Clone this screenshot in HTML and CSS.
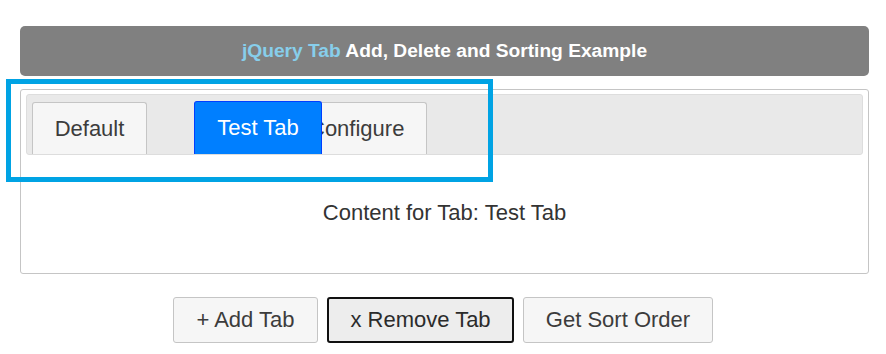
FILE: index.html
```html
<!DOCTYPE html>
<html lang="en">
<head>
<meta charset="utf-8">
<title>jQuery Tab Add, Delete and Sorting Example</title>
<link rel="stylesheet" href="styles.css">
</head>
<body>
<div class="page">
  <h1 class="title"><span class="title-accent">jQuery Tab</span> Add, Delete and Sorting Example</h1>

  <div class="tabs">
    <ul class="tab-nav">
      <li class="tab tab-default">Default</li>
      <li class="tab-placeholder"></li>
      <li class="tab tab-configure">Configure</li>
      <li class="tab tab-active tab-dragging">Test Tab</li>
    </ul>
    <div class="tab-panel">Content for Tab: Test Tab</div>
  </div>

  <div class="actions">
    <button class="btn btn-add" type="button">+ Add Tab</button>
    <button class="btn btn-remove btn-focus" type="button">x Remove Tab</button>
    <button class="btn btn-sort" type="button">Get Sort Order</button>
  </div>

  <div class="highlight"></div>
</div>
</body>
</html>
```

FILE: styles.css
```css
html, body {
  margin: 0;
  padding: 0;
  background: #ffffff;
}

body {
  font-family: "Liberation Sans", Arial, Helvetica, sans-serif;
  color: #3c3c3c;
}

.page {
  position: relative;
  padding: 26px 17px 0 20px;
}

.title {
  margin: 0;
  height: 50px;
  line-height: 50px;
  background: #808080;
  border-radius: 5px;
  color: #ffffff;
  font-size: 19.2px;
  font-weight: bold;
  text-align: center;
}

.title-accent {
  color: #87ceeb;
}

.tabs {
  margin-top: 13px;
  box-sizing: border-box;
  height: 185px;
  border: 1px solid #c5c5c5;
  border-radius: 3px;
  padding: 4px 5px;
}

.tab-nav {
  position: relative;
  list-style: none;
  margin: 0;
  box-sizing: border-box;
  height: 61px;
  padding: 7px 0 0 5px;
  background: #e9e9e9;
  border: 1px solid #dddddd;
  border-radius: 3px;
  display: flex;
  align-items: flex-end;
}

.tab {
  box-sizing: border-box;
  height: 52px;
  padding: 0 22px;
  margin-right: 4px;
  display: flex;
  align-items: center;
  background: #f6f6f6;
  border: 1px solid #c5c5c5;
  border-bottom: 0;
  border-radius: 3px 3px 0 0;
  font-size: 22px;
  color: #3c3c3c;
  white-space: nowrap;
}

.tab-default {
  width: 115px;
  padding: 0;
  justify-content: center;
}

.tab-placeholder {
  width: 131px;
  margin-right: 4px;
  height: 52px;
  visibility: hidden;
}

.tab-configure {
  width: 141px;
}

.tab-active {
  background: #007fff;
  border-color: #003eff;
  color: #ffffff;
}

.tab-dragging {
  position: absolute;
  left: 167px;
  top: 6px;
  width: 128px;
  height: 53px;
  padding: 0;
  margin: 0;
  justify-content: center;
}

.tab-panel {
  padding-top: 45px;
  text-align: center;
  font-size: 22px;
  color: #333333;
}

.actions {
  margin-top: 23px;
  display: flex;
  justify-content: center;
  gap: 9px;
  padding-right: 3px;
}

.btn {
  box-sizing: border-box;
  height: 46px;
  padding: 0;
  font-family: inherit;
  font-size: 22px;
  color: #3c3c3c;
  background: #f6f6f6;
  border: 1px solid #c5c5c5;
  border-radius: 3px;
}

.btn-add {
  width: 145px;
}

.btn-remove {
  width: 187px;
}

.btn-sort {
  width: 190px;
}

.btn-focus {
  background: #ededed;
  border: 2px solid #111111;
  color: #2b2b2b;
}

.highlight {
  position: absolute;
  left: 6px;
  top: 79px;
  width: 487px;
  height: 103px;
  box-sizing: border-box;
  border: 5px solid #00a3e4;
  pointer-events: none;
}
```
